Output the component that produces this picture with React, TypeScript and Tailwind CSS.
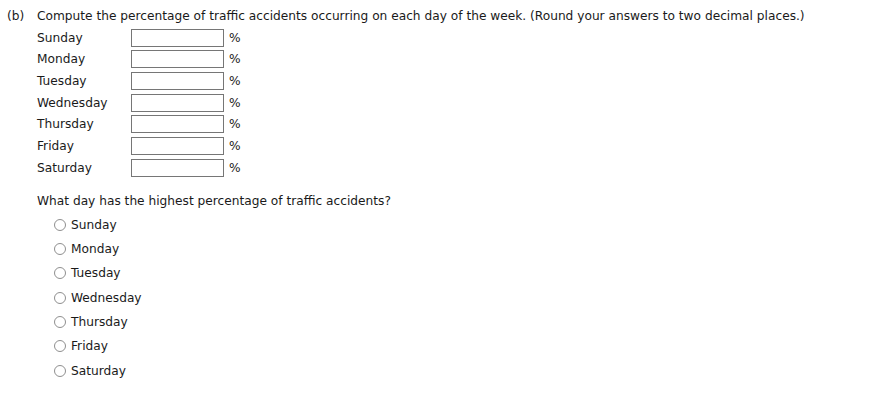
const days = ["Sunday", "Monday", "Tuesday", "Wednesday", "Thursday", "Friday", "Saturday"];

export default function App() {
  return (
    <div className="w-[876px] h-[404px] bg-white text-[12.2px] text-[#1a1a1a] font-['DejaVu_Sans',Verdana,sans-serif] pl-[7px] pt-[7px]">
      <div className="flex">
        <div className="w-[30px] leading-[18px]">(b)</div>
        <div className="flex-1">
          <p className="leading-[18px]">
            Compute the percentage of traffic accidents occurring on each day of the week. (Round your answers to two
            decimal places.)
          </p>

          {/* Percent inputs */}
          <div className="mt-[2px] flex flex-col">
            {days.map((d) => (
              <div key={d} className="flex items-center h-[21.67px]">
                <span className="w-[94px]">{d}</span>
                <input
                  type="text"
                  className="w-[93px] h-[18px] border border-[#767676] bg-white outline-none"
                />
                <span className="ml-[5px]">%</span>
              </div>
            ))}
          </div>

          <p className="mt-[13px] leading-[18px]">What day has the highest percentage of traffic accidents?</p>

          {/* Radio options */}
          <div className="mt-[3px] pl-[17px] flex flex-col">
            {days.map((d) => (
              <label key={d} className="flex items-center h-[24.33px]">
                <span className="w-[12px] h-[12px] rounded-full border border-[#8f8f8f] bg-white" />
                <span className="ml-[5px]">{d}</span>
              </label>
            ))}
          </div>
        </div>
      </div>
    </div>
  );
}
